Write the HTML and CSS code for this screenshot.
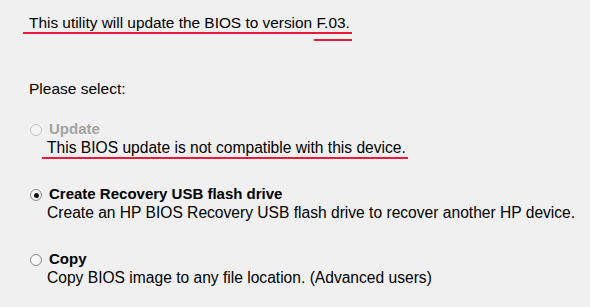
FILE: index.html
```html
<!DOCTYPE html>
<html>
<head>
<meta charset="utf-8">
<link rel="stylesheet" href="styles.css">
</head>
<body>
<div class="page">
  <p class="headline"><span class="mark">This utility will update the BIOS to version <span class="ver">F.03.</span></span></p>
  <p class="prompt">Please select:</p>
  <div class="option disabled">
    <span class="radio"></span>
    <div class="body">
      <div class="title">Update</div>
      <div class="desc"><span class="mark mark-desc">This BIOS update is not compatible with this device.</span></div>
    </div>
  </div>
  <div class="option">
    <span class="radio checked"></span>
    <div class="body">
      <div class="title">Create Recovery USB flash drive</div>
      <div class="desc">Create an HP BIOS Recovery USB flash drive to recover another HP device.</div>
    </div>
  </div>
  <div class="option">
    <span class="radio"></span>
    <div class="body">
      <div class="title">Copy</div>
      <div class="desc">Copy BIOS image to any file location. (Advanced users)</div>
    </div>
  </div>
</div>
</body>
</html>
```
FILE: styles.css
```css
html, body {
  margin: 0;
  padding: 0;
  background: #f0f0f0;
}
body {
  font-family: "Liberation Sans", Arial, sans-serif;
  color: #000;
  width: 590px;
  height: 307px;
  overflow: hidden;
}
.page {
  padding: 13px 0 0 29px;
}
p {
  margin: 0;
}
.headline {
  font-size: 15.4px;
  line-height: 19px;
}
.mark {
  border-bottom: 2px solid #ea1a3c;
  padding: 0 2px 1px 6px;
  margin-left: -6px;
}
.ver {
  position: relative;
}
.ver::after {
  content: "";
  position: absolute;
  left: -2px;
  right: -2px;
  bottom: -10px;
  height: 2px;
  background: #ea1a3c;
}
.prompt {
  font-size: 15.5px;
  line-height: 19px;
  margin-top: 47px;
}
.option {
  display: flex;
  align-items: flex-start;
  gap: 7px;
  margin-top: 21px;
}
.option + .option {
  margin-top: 27px;
}
.radio {
  flex: none;
  width: 12px;
  height: 12px;
  box-sizing: border-box;
  border-radius: 50%;
  border: 1px solid #8a8a8a;
  background: radial-gradient(circle at 40% 40%, #ffffff 0, #f4f4f4 60%, #dcdcdc 100%);
  margin-top: 5px;
  margin-left: 1px;
  position: relative;
}
.radio.checked::after {
  content: "";
  position: absolute;
  left: 2.5px;
  top: 2.5px;
  width: 5px;
  height: 5px;
  border-radius: 50%;
  background: #111;
}
.disabled .radio {
  border-color: #c4c4c4;
  background: #f4f4f4;
}
.body {
  display: flex;
  flex-direction: column;
  margin-left: -1px;
}
.title {
  font-size: 15px;
  font-weight: bold;
  line-height: 19px;
  margin-left: 1px;
}
.disabled .title {
  color: #a3a3a3;
}
.desc {
  font-size: 15.6px;
  line-height: 19px;
  margin-left: -1px;
}
.mark-desc {
  padding-left: 5px;
  margin-left: -5px;
}
```
